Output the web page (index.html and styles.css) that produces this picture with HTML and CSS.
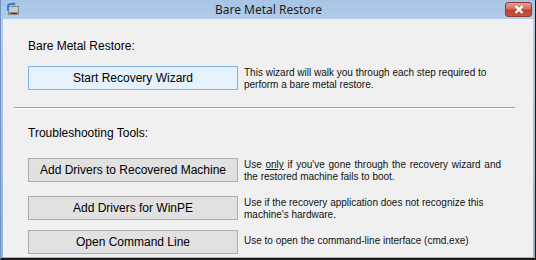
FILE: index.html
```html
<!DOCTYPE html>
<html>
<head>
<meta charset="utf-8">
<link rel="stylesheet" href="styles.css">
</head>
<body>
<div class="window">
  <div class="titlebar">
    <svg class="app-icon" width="14" height="14" viewBox="0 0 14 14">
      <rect x="2" y="4" width="11" height="9" fill="#8a8a8a"/>
      <rect x="3" y="5" width="9" height="5" fill="#c9c9c9"/>
      <rect x="5" y="11" width="6" height="1" fill="#3a3a3a"/>
      <path d="M2 9 V4 Q2 2 5 2 H8" fill="none" stroke="#2f7fd8" stroke-width="2"/>
      <path d="M7 0 L10 2 L7 4 Z" fill="#2f7fd8"/>
    </svg>
    <div class="title">Bare Metal Restore</div>
    <div class="close">
      <svg width="12" height="9" viewBox="0 0 12 9">
        <path d="M2.5 1 L9.5 8 M9.5 1 L2.5 8" stroke="#ffffff" stroke-width="2.4"/>
      </svg>
    </div>
  </div>
  <div class="content">
    <div class="heading">Bare Metal Restore:</div>
    <div class="row row-first">
      <div class="btn btn-default">Start Recovery Wizard</div>
      <div class="desc">This wizard will walk you through each step required to<br>perform a bare metal restore.</div>
    </div>
    <div class="separator"></div>
    <div class="heading heading-2">Troubleshooting Tools:</div>
    <div class="row row-2">
      <div class="btn">Add Drivers to Recovered Machine</div>
      <div class="desc desc-justify"><span class="jline">Use <u>only</u> if you've gone through the recovery wizard and</span>the restored machine fails to boot.</div>
    </div>
    <div class="row row-3">
      <div class="btn">Add Drivers for WinPE</div>
      <div class="desc">Use if the recovery application does not recognize this<br>machine's hardware.</div>
    </div>
    <div class="row row-4">
      <div class="btn">Open Command Line</div>
      <div class="desc desc-single">Use to open the command-line interface (cmd.exe)</div>
    </div>
  </div>
</div>
</body>
</html>
```
FILE: styles.css
```css
html, body {
  margin: 0;
  padding: 0;
  background: #ffffff;
}
.window {
  width: 536px;
  height: 260px;
  box-sizing: border-box;
  background: linear-gradient(to bottom, #a8c4e5, #b2cdea 19px, #8fb2dc 100%);
  border-right: 1px solid #1b1b1b;
  border-bottom: 2px solid #1b1b1b;
  border-left: 1px solid #6f95c6;
  padding: 0 2px 1px 2px;
  display: flex;
  flex-direction: column;
  font-family: "Liberation Sans", Arial, sans-serif;
  color: #000;
}
.titlebar {
  height: 19px;
  flex: none;
  position: relative;
  display: flex;
  align-items: center;
  justify-content: center;
}
.app-icon {
  position: absolute;
  left: 3px;
  top: 2px;
}
.title {
  font-family: "Noto Sans", "Liberation Sans", sans-serif;
  font-size: 12px;
  color: #1e1e1e;
  margin-top: -1px;
  margin-left: 1px;
}
.close {
  position: absolute;
  right: 1px;
  top: 2px;
  width: 27px;
  height: 15px;
  box-sizing: border-box;
  border: 1px solid #8e3b30;
  border-radius: 3px;
  background: linear-gradient(to bottom, #e2a093 0%, #d3705f 45%, #c0412c 55%, #c9513c 100%);
  display: flex;
  align-items: center;
  justify-content: center;
}
.content {
  flex: 1;
  background: #f0f0f0;
  padding: 20px 0 0 25px;
  display: flex;
  flex-direction: column;
}
.heading {
  font-size: 12px;
  line-height: 14px;
  height: 14px;
}
.heading-2 {
  margin-top: 17px;
}
.row {
  display: flex;
  align-items: flex-start;
  gap: 6px;
}
.row-first { margin-top: 13px; }
.row-2 { margin-top: 18px; }
.row-3 { margin-top: 14px; }
.row-4 { margin-top: 10px; }
.btn {
  width: 210px;
  height: 24px;
  box-sizing: border-box;
  flex: none;
  border: 1px solid #adadad;
  background: #e1e1e1;
  font-size: 12px;
  display: flex;
  align-items: center;
  justify-content: center;
  color: #000;
}
.btn-default {
  border-color: #7fb2e5;
  background: #e5f1fb;
}
.desc {
  font-size: 10px;
  line-height: 11.5px;
  white-space: nowrap;
  color: #111;
  margin-top: 1px;
}
.desc-justify {
  width: 257px;
}
.jline {
  display: block;
  white-space: normal;
  text-align: justify;
  text-align-last: justify;
}
.desc-single {
  margin-top: 5px;
}
.separator {
  margin: 17px 18px 0 -14px;
  height: 1px;
  background: #a0a0a0;
  border-bottom: 1px solid #ffffff;
}
```
